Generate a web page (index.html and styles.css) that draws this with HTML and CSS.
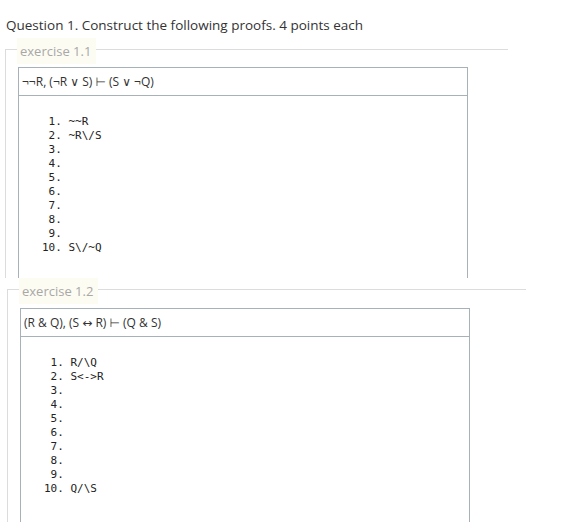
FILE: index.html
```html
<!DOCTYPE html>
<html>
<head>
<meta charset="utf-8">
<link rel="stylesheet" href="styles.css">
</head>
<body>
<div class="question">Question 1. Construct the following proofs. 4 points each</div>

<div class="exercise">
  <div class="legend">exercise 1.1</div>
  <div class="premise">¬¬R, (¬R ∨ S) ⊢ (S ∨ ¬Q)</div>
  <pre class="proof"> 1. ~~R
 2. ~R\/S
 3.
 4.
 5.
 6.
 7.
 8.
 9.
10. S\/~Q</pre>
</div>

<div class="exercise exercise--wide">
  <div class="legend">exercise 1.2</div>
  <div class="premise">(R &amp; Q), (S ↔ R) ⊢ (Q &amp; S)</div>
  <pre class="proof"> 1. R/\Q
 2. S&lt;-&gt;R
 3.
 4.
 5.
 6.
 7.
 8.
 9.
10. Q/\S</pre>
</div>
</body>
</html>
```
FILE: styles.css
```css
html, body {
  margin: 0;
  background: #fff;
}

body {
  font-family: "Open Sans", "Noto Sans", "DejaVu Sans", sans-serif;
  color: #333;
}

.question {
  padding: 15px 0 0 6px;
  font-size: 13.5px;
  line-height: 20px;
  color: #333;
}

.exercise {
  box-sizing: border-box;
  display: flex;
  flex-direction: column;
  margin: 14px 0 0 5px;
  width: 503px;
  height: 229px;
  border-top: 1px solid #dcdcdc;
  border-left: 1px solid #dcdcdc;
  padding-left: 12px;
}

.exercise--wide {
  margin: 11px 0 0 7px;
  width: 519px;
  height: 240px;
}

.legend {
  align-self: flex-start;
  box-sizing: border-box;
  height: 26px;
  width: 79px;
  margin: -12px 0 3px -1px;
  padding: 0 0 0 3px;
  background: #fdfcf3;
  color: #a8a8a8;
  font-size: 13px;
  line-height: 26px;
}

.exercise--wide .legend {
  margin-bottom: 4px;
}

.premise {
  box-sizing: border-box;
  width: 450px;
  height: 28px;
  border: 1px solid #a7b1b8;
  border-bottom: 0;
  padding-left: 3px;
  font-size: 12px;
  line-height: 27px;
  color: #333;
  white-space: nowrap;
}

.proof {
  box-sizing: border-box;
  flex: 1;
  width: 450px;
  margin: 0;
  border: 1px solid #a7b1b8;
  border-bottom: 0;
  padding: 19px 0 0 23px;
  font-family: "DejaVu Sans Mono", "Liberation Mono", monospace;
  font-size: 11px;
  line-height: 14px;
  color: #222;
}
```
